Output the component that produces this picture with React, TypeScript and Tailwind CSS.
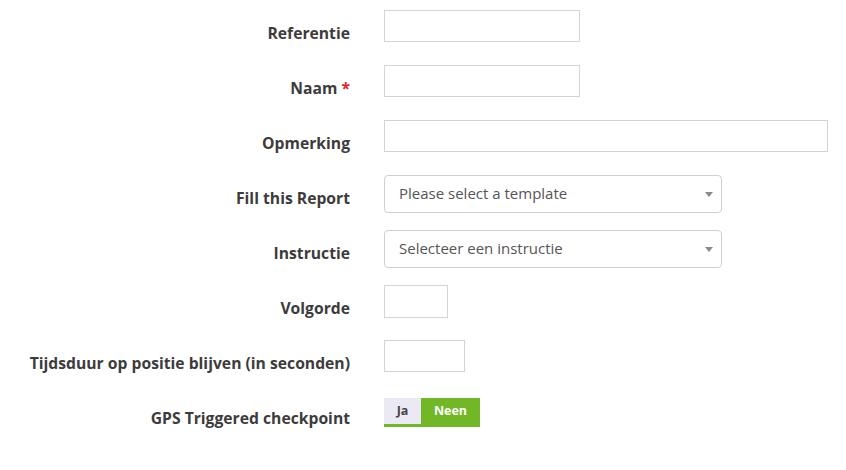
import React from "react";

const font = { fontFamily: '"Open Sans", "Liberation Sans", sans-serif' };

function Label({ children }: { children: React.ReactNode }) {
  return (
    <div className="w-[350px] shrink-0 text-right text-[15.7px] font-bold leading-[22px] text-[#3c3c3c] pt-[12px]">
      {children}
    </div>
  );
}

function Caret() {
  return (
    <svg width="8" height="5" viewBox="0 0 8 5" className="absolute right-[8px] top-[16px]">
      <path d="M0 0 L8 0 L4 5 Z" fill="#8a8a8a" />
    </svg>
  );
}

export default function App() {
  return (
    <div style={font} className="w-[846px] h-[470px] bg-white pt-[10px]">
      <div className="flex h-[55px] gap-[34px]">
        <Label>Referentie</Label>
        <div className="w-[196px] h-[32px] border border-[#d4d4d4] bg-white" />
      </div>
      <div className="flex h-[55px] gap-[34px]">
        <Label>
          Naam <span className="text-[#d9252e]">*</span>
        </Label>
        <div className="w-[196px] h-[32px] border border-[#d4d4d4] bg-white" />
      </div>
      <div className="flex h-[55px] gap-[34px]">
        <Label>Opmerking</Label>
        <div className="w-[444px] h-[32px] border border-[#d4d4d4] bg-white" />
      </div>
      <div className="flex h-[55px] gap-[34px]">
        <Label>Fill this Report</Label>
        <div className="relative w-[338px] h-[38px] border border-[#cfcfcf] rounded-[4px] bg-white pl-[14px] text-[15px] leading-[34px] text-[#555]">
          Please select a template
          <Caret />
        </div>
      </div>
      <div className="flex h-[55px] gap-[34px]">
        <Label>Instructie</Label>
        <div className="relative w-[338px] h-[38px] border border-[#cfcfcf] rounded-[4px] bg-white pl-[14px] text-[15px] leading-[34px] text-[#555]">
          Selecteer een instructie
          <Caret />
        </div>
      </div>
      <div className="flex h-[55px] gap-[34px]">
        <Label>Volgorde</Label>
        <div className="w-[64px] h-[33px] border border-[#d4d4d4] bg-white" />
      </div>
      <div className="flex h-[55px] gap-[34px]">
        <Label>Tijdsduur op positie blijven (in seconden)</Label>
        <div className="w-[81px] h-[32px] border border-[#d4d4d4] bg-white" />
      </div>
      <div className="flex h-[55px] gap-[34px]">
        <Label>GPS Triggered checkpoint</Label>
        <div className="mt-[3px] flex h-[29px] border-b-[3px] border-[#72b826]">
          <div className="w-[37px] bg-[#ebe9f3] text-[12.5px] font-bold text-[#444] flex items-center justify-center">
            Ja
          </div>
          <div className="w-[59px] bg-[#72b826] text-[12.5px] font-bold text-white flex items-center justify-center">
            Neen
          </div>
        </div>
      </div>
    </div>
  );
}
